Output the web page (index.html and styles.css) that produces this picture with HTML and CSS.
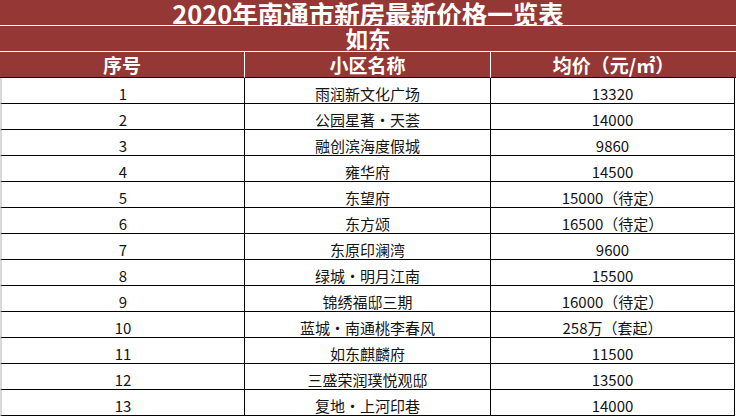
FILE: index.html
```html
<!DOCTYPE html>
<html lang="zh-CN">
<head>
<meta charset="utf-8">
<title>2020年南通市新房最新价格一览表</title>
<link rel="stylesheet" href="styles.css">
</head>
<body>
<div class="sheet">
  <div class="cell title">2020年南通市新房最新价格一览表</div>
  <div class="cell region">如东</div>
  <div class="cell head">序号</div>
  <div class="cell head">小区名称</div>
  <div class="cell head last">均价（元/㎡）</div>

  <div class="cell first">1</div><div class="cell">雨润新文化广场</div><div class="cell last">13320</div>
  <div class="cell first">2</div><div class="cell">公园星著·天荟</div><div class="cell last">14000</div>
  <div class="cell first">3</div><div class="cell">融创滨海度假城</div><div class="cell last">9860</div>
  <div class="cell first">4</div><div class="cell">雍华府</div><div class="cell last">14500</div>
  <div class="cell first">5</div><div class="cell">东望府</div><div class="cell last">15000（待定）</div>
  <div class="cell first">6</div><div class="cell">东方颂</div><div class="cell last">16500（待定）</div>
  <div class="cell first">7</div><div class="cell">东原印澜湾</div><div class="cell last">9600</div>
  <div class="cell first">8</div><div class="cell">绿城·明月江南</div><div class="cell last">15500</div>
  <div class="cell first">9</div><div class="cell">锦绣福邸三期</div><div class="cell last">16000（待定）</div>
  <div class="cell first">10</div><div class="cell">蓝城·南通桃李春风</div><div class="cell last">258万（套起）</div>
  <div class="cell first">11</div><div class="cell">如东麒麟府</div><div class="cell last">11500</div>
  <div class="cell first">12</div><div class="cell">三盛荣润璞悦观邸</div><div class="cell last">13500</div>
  <div class="cell first">13</div><div class="cell">复地·上河印巷</div><div class="cell last">14000</div>
</div>
</body>
</html>
```

FILE: styles.css
```css
html, body {
  margin: 0;
  padding: 0;
  background: #ffffff;
}

body {
  font-family: "Noto Sans CJK SC", "Noto Sans", sans-serif;
  color: #141414;
}

.sheet {
  display: grid;
  grid-template-columns: 245px 246px 244px;
  grid-auto-rows: 26px;
  width: 735px;
}

.cell {
  box-sizing: border-box;
  overflow: hidden;
  white-space: nowrap;
  text-align: center;
  font-size: 15px;
  line-height: 18px;
  padding-top: 7px;
  border-right: 1px solid #000000;
  border-bottom: 1px solid #000000;
}

.cell.first {
  border-left: 2px solid #d9d9d9;
}

.title,
.region,
.head {
  background: #953735;
  color: #ffffff;
  font-weight: 700;
  padding-top: 0;
  line-height: 25px;
  border-bottom-color: #ffffff;
}

.title {
  grid-column: 1 / -1;
  font-size: 25.5px;
  border-right: none;
  width: 736px;
}

.region {
  grid-column: 1 / -1;
  font-size: 22.5px;
  border-right: none;
  width: 736px;
}

.head {
  font-size: 19px;
  border-right-color: #ffffff;
  border-bottom-color: #000000;
}

.head.last {
  border-right: none;
  width: 245px;
}
```
